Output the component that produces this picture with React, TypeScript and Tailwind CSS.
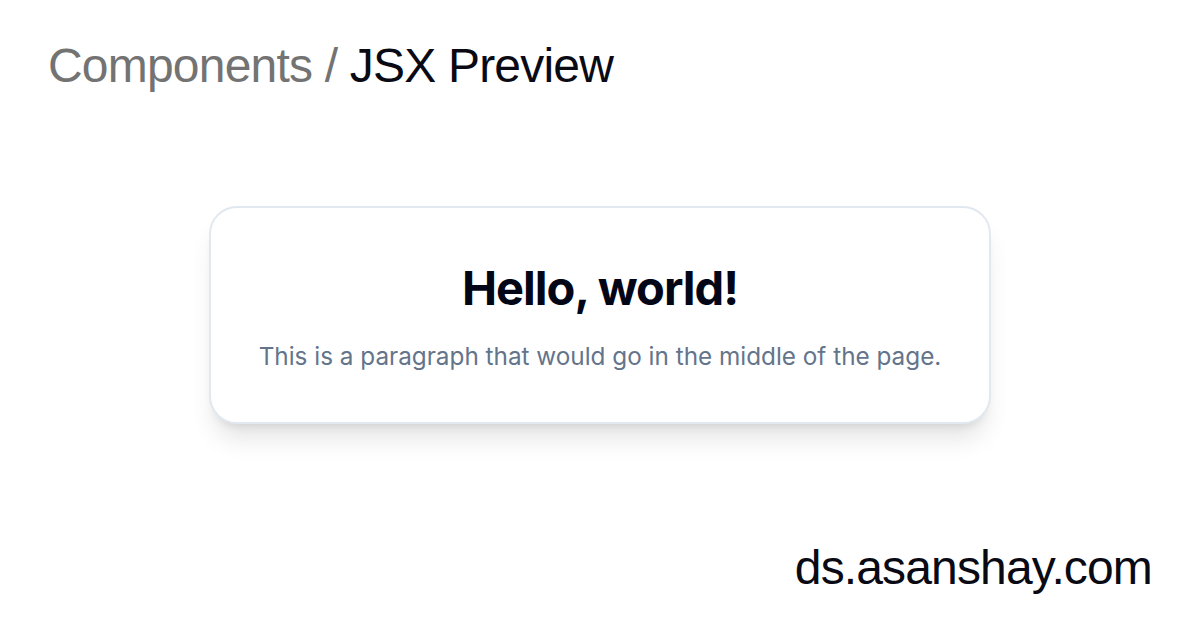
export default function App() {
  return (
    <div className="w-[1200px] h-[630px] bg-white flex flex-col px-12 pt-[38px] pb-[34px]" style={{ fontFamily: '"Liberation Sans", Arial, sans-serif' }}>
      <div className="text-[48px] leading-[56px] tracking-[-0.8px]">
        <span className="text-[#737373]">Components / </span>
        <span className="text-[#0a0a14]">JSX Preview</span>
      </div>
      <div className="flex-1 flex items-start justify-center pt-[112px]">
        <div
          className="w-[782px] h-[218px] bg-white border-2 border-[#e2e8f0] rounded-[28px] shadow-xl flex flex-col items-center pt-[52px]"
          style={{ fontFamily: 'Inter, sans-serif' }}
        >
          <h1 className="text-[47px] leading-[56px] font-bold text-[#020617] tracking-[-1px]">Hello, world!</h1>
          <p className="mt-[24px] text-[24.3px] leading-[32px] text-[#64748b]">
            This is a paragraph that would go in the middle of the page.
          </p>
        </div>
      </div>
      <div className="flex justify-end">
        <span className="text-[48px] leading-[56px] text-[#0a0a14] tracking-[-0.85px]">ds.asanshay.com</span>
      </div>
    </div>
  );
}
